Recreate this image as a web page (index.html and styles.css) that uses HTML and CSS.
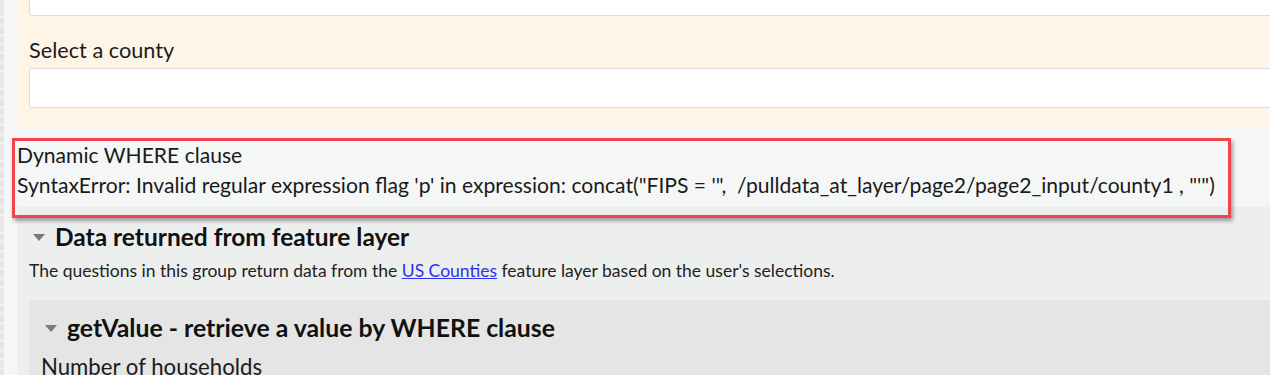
FILE: index.html
```html
<!DOCTYPE html>
<html>
<head>
<meta charset="utf-8">
<link rel="stylesheet" href="styles.css">
</head>
<body>
<div class="page">
  <div class="strip"></div>
  <div class="main">
    <div class="orange">
      <div class="input first"></div>
      <div class="label">Select a county</div>
      <div class="input"></div>
    </div>
    <div class="note">
      <div class="note-line">Dynamic WHERE clause</div>
      <div class="note-line">SyntaxError: Invalid regular expression flag 'p' in expression: concat("FIPS = '",&nbsp; /pulldata_at_layer/page2/page2_input/county1 , "'")</div>
      <div class="annot"></div>
    </div>
    <div class="group">
      <div class="group-head"><span class="tri"></span><span class="group-title">Data returned from feature layer</span></div>
      <div class="desc">The questions in this group return data from the <a href="#" class="link">US Counties</a> feature layer based on the user's selections.</div>
      <div class="sub">
        <div class="sub-head"><span class="tri"></span><span class="group-title sub-title">getValue - retrieve a value by WHERE clause</span></div>
        <div class="label sub-label">Number of households</div>
      </div>
    </div>
  </div>
</div>
</body>
</html>
```
FILE: styles.css
```css
html, body {
  margin: 0;
  padding: 0;
  overflow: hidden;
  background: #f5f6f6;
}
.page {
  display: flex;
  width: 1310px;
  height: 375px;
  overflow: hidden;
}
.strip {
  width: 4px;
  flex: none;
  background: repeating-linear-gradient(180deg, #e6e6e6 0 7px, #f0f0f0 7px 9px);
}
.main {
  flex: 1;
  padding-left: 13px;
  font-family: Lato, "Liberation Sans", sans-serif;
  color: #1b1b1b;
}
.orange {
  background: #fff5e6;
  padding: 0 0 20px 12px;
}
.input {
  height: 38px;
  background: #fff;
  border: 1px solid #dcdcdc;
  border-radius: 3px;
}
.input.first {
  margin-top: -24px;
}
.label {
  font-size: 21.7px;
  line-height: 28px;
  margin-top: 20px;
  margin-bottom: 4px;
}
.note {
  position: relative;
  padding: 12px 0 7px 0;
  color: #1a1a1a;
}
.note-line {
  font-size: 21.1px;
  line-height: 30px;
  white-space: nowrap;
}
.annot {
  position: absolute;
  left: -5px;
  top: 10px;
  width: 1213px;
  height: 74px;
  border: 3px solid #f2444b;
  box-shadow: 2px 3px 4px rgba(0, 0, 0, 0.35);
}
.group {
  background: #edefee;
  padding: 13px 0 0 12px;
}
.group-head, .sub-head {
  display: flex;
  align-items: center;
  gap: 10px;
  padding-left: 4px;
  height: 32px;
}
.tri {
  width: 0;
  height: 0;
  border-left: 6px solid transparent;
  border-right: 6px solid transparent;
  border-top: 7px solid #7a7a7a;
  margin-top: 2px;
}
.group-title {
  font-weight: 700;
  font-size: 24.5px;
  color: #111;
}
.sub-title {
  font-size: 24.8px;
}
.desc {
  font-size: 17.5px;
  line-height: 22px;
  margin-top: 8px;
  color: #222;
}
.link {
  color: #2f2fee;
  text-decoration: underline;
}
.sub {
  margin-top: 18px;
  background: #e4e5e4;
  border-radius: 4px 0 0 0;
  padding: 11px 0 0 12px;
  height: 200px;
}
.sub-label {
  font-size: 22.2px;
  margin-top: 10px;
  margin-bottom: 0;
}
```
